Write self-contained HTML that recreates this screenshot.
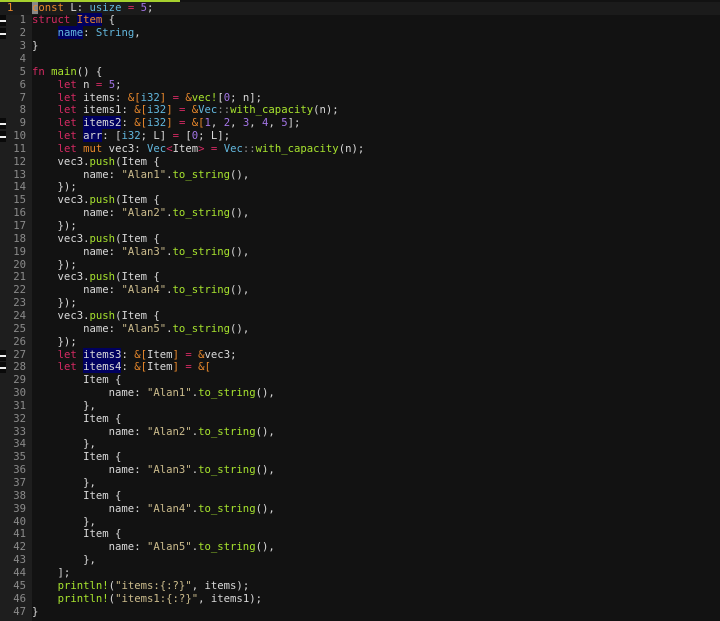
<!DOCTYPE html>
<html><head><meta charset="utf-8"><style>
html,body{margin:0;padding:0;background:#121212;width:720px;height:621px;overflow:hidden}
body{position:relative;font-family:"DejaVu Sans Mono","Liberation Mono",monospace;font-size:10.62px;color:#d8d8d8}
#gut{position:absolute;left:0;top:0;width:32px;height:621px;background:#1e1e1e}
#sign{position:absolute;left:0;top:0;width:6px;height:621px;background:#1e1e1e}
#bar{position:absolute;left:0;top:0;width:180px;height:2px;background:#a6d02e}
.r{position:absolute;left:0;width:720px;height:12.85px;line-height:12.85px;white-space:pre}
.ln{position:absolute;left:6px;width:20px;text-align:right;color:#8a8a8a}
.c{position:absolute;left:32px}
.m{position:absolute;left:0;top:1px;width:6px;height:11px;background:#0a0a0a}
.m:after{content:"";position:absolute;left:0;top:5px;width:6px;height:2px;background:#eee}
.k{color:#d42a62}.o{color:#e8882c}.b{color:#62b6dc}.n{color:#a274e4}.f{color:#a6e22e}.s{color:#cbbb8c}.g{color:#8a8a8a}.h{background:#00005f}
.cur{background:#888;color:#e8882c}
</style></head><body>
<div id="gut"></div><div id="sign"></div>
<div class="r" style="top:2px;background:#1b1b1b"><span class="ln" style="text-align:left;left:7px;color:#e8882c">1</span><span class="c"><span class="cur">c</span><span class="o">onst</span> L: <span class="b">usize</span> <span class="k">=</span> <span class="n">5</span>;</span></div>
<div id="bar"></div>
<div id="lines"></div>
<script>
const L=[
[1,'<span class="k">struct</span> <span class="o h">Item</span> {',1],
[2,'    <span class="h b">name</span>: <span class="b">String</span>,',1],
[3,'}'],[4,''],
[5,'<span class="k">fn</span> <span class="f">main</span>() {'],
[6,'    <span class="k">let</span> n <span class="k">=</span> <span class="n">5</span>;'],
[7,'    <span class="k">let</span> items: <span class="o">&amp;[</span><span class="b">i32</span><span class="o">]</span> <span class="k">=</span> <span class="o">&amp;</span><span class="f">vec!</span>[<span class="n">0</span>; n];'],
[8,'    <span class="k">let</span> items1: <span class="o">&amp;[</span><span class="b">i32</span><span class="o">]</span> <span class="k">=</span> <span class="o">&amp;</span><span class="b">Vec</span><span class="g">::</span><span class="f">with_capacity</span>(n);'],
[9,'    <span class="k">let</span> <span class="h">items2</span>: <span class="o">&amp;[</span><span class="b">i32</span><span class="o">]</span> <span class="k">=</span> <span class="o">&amp;[</span><span class="n">1</span>, <span class="n">2</span>, <span class="n">3</span>, <span class="n">4</span>, <span class="n">5</span>];',1],
[10,'    <span class="k">let</span> <span class="h">arr</span>: [<span class="b">i32</span>; L] <span class="k">=</span> [<span class="n">0</span>; L];',1],
[11,'    <span class="k">let</span> <span class="o">mut</span> vec3: <span class="b">Vec</span><span class="k">&lt;</span>Item<span class="k">&gt;</span> <span class="k">=</span> <span class="b">Vec</span><span class="g">::</span><span class="f">with_capacity</span>(n);']
];
let n=12;
for(let i=1;i<=5;i++){
L.push([n++,'    vec3.<span class="f">push</span>(Item {']);
L.push([n++,'        name: <span class="s">"Alan'+i+'"</span>.<span class="f">to_string</span>(),']);
L.push([n++,'    });']);
}
L.push([27,'    <span class="k">let</span> <span class="h">items3</span>: <span class="o">&amp;[</span>Item<span class="o">]</span> <span class="k">=</span> <span class="o">&amp;</span>vec3;',1]);
L.push([28,'    <span class="k">let</span> <span class="h">items4</span>: <span class="o">&amp;[</span>Item<span class="o">]</span> <span class="k">=</span> <span class="o">&amp;[</span>',1]);
n=29;
for(let i=1;i<=5;i++){
L.push([n++,'        Item {']);
L.push([n++,'            name: <span class="s">"Alan'+i+'"</span>.<span class="f">to_string</span>(),']);
L.push([n++,'        },']);
}
L.push([44,'    ];']);
L.push([45,'    <span class="f">println!</span>(<span class="s">"items:{:?}"</span>, items);']);
L.push([46,'    <span class="f">println!</span>(<span class="s">"items1:{:?}"</span>, items1);']);
L.push([47,'}']);
let h='';
L.forEach((l,i)=>{
h+='<div class="r" style="top:'+(14.4+12.85*i).toFixed(2)+'px">'+(l[2]?'<span class="m"></span>':'')+'<span class="ln">'+l[0]+'</span><span class="c">'+l[1]+'</span></div>';
});
document.getElementById('lines').innerHTML=h;
</script>
</body></html>
